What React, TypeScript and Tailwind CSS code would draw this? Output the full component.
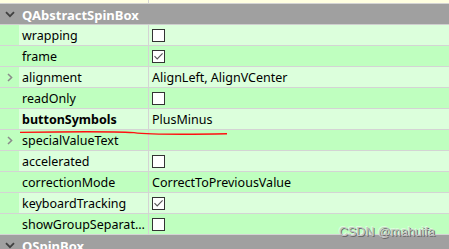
import React from "react";

type Row = {
  name: string;
  value?: string;
  check?: boolean | null;
  bold?: boolean;
  expand?: boolean;
};

const rows: Row[] = [
  { name: "wrapping", check: false },
  { name: "frame", check: true },
  { name: "alignment", value: "AlignLeft, AlignVCenter", expand: true },
  { name: "readOnly", check: false },
  { name: "buttonSymbols", value: "PlusMinus", bold: true },
  { name: "specialValueText", value: "", expand: true },
  { name: "accelerated", check: false },
  { name: "correctionMode", value: "CorrectToPreviousValue" },
  { name: "keyboardTracking", check: true },
  { name: "showGroupSeparat…", check: false },
];

function CheckBox({ checked }: { checked: boolean }) {
  return (
    <div className="w-[13px] h-[13px] border border-[#333333] bg-white flex items-center justify-center">
      {checked && (
        <svg width="11" height="11" viewBox="0 0 11 11">
          <path d="M1.5 5.2 L4.2 7.9 L9.6 2.3" fill="none" stroke="#555555" strokeWidth="1.1" />
        </svg>
      )}
    </div>
  );
}

function Header({ title }: { title: string }) {
  return (
    <div className="h-[21px] shrink-0 bg-[#a0a0a0] border-b border-[#cfcfcf] flex items-center">
      <div className="w-[19px] h-full flex items-center justify-center">
        <svg width="10" height="7" viewBox="0 0 10 7">
          <path d="M1 1.2 L5 5.2 L9 1.2" fill="none" stroke="#404040" strokeWidth="1.8" />
        </svg>
      </div>
      <span className="pl-[3px] pt-[2px] font-bold text-white text-[13px] leading-none">{title}</span>
    </div>
  );
}

export default function App() {
  return (
    <div className="relative w-[449px] h-[249px] overflow-hidden bg-white font-['Noto_Sans',sans-serif] text-[12.5px] text-black">
      <div className="flex flex-col">
        {/* partially visible row */}
        <div className="h-[4px] shrink-0 bg-[#ffffe1] border-b border-[#d4d4d4] flex overflow-hidden">
          <div className="w-[149px] border-r border-[#d4d4d4]" />
          <div className="pl-[3px] leading-[16px] -mt-[15px] whitespace-nowrap">ImhDigitsOnly</div>
        </div>
        <Header title="QAbstractSpinBox" />
        {rows.map((r, i) => {
          const light = i % 2 === 0;
          const bg = light ? "bg-[#dcffdc]" : "bg-[#bfffbf]";
          const isCheck = r.check !== undefined && r.check !== null;
          return (
            <div key={r.name} className={`h-[21px] shrink-0 flex border-b border-[#d4d4d4] ${bg}`}>
              <div className="w-[19px] shrink-0 bg-[#bfffbf] flex items-center justify-center">
                {r.expand && (
                  <svg width="6" height="9" viewBox="0 0 6 9">
                    <path d="M1 1 L4.6 4.5 L1 8" fill="none" stroke="#8a8a8a" strokeWidth="1.5" />
                  </svg>
                )}
              </div>
              <div
                className={`w-[130px] shrink-0 border-r border-[#d4d4d4] pl-[3px] pt-[2px] flex items-center whitespace-nowrap overflow-hidden ${
                  r.bold ? "font-bold" : ""
                }`}
              >
                {r.name}
              </div>
              <div className={`flex-1 pl-[3px] flex items-center whitespace-nowrap ${isCheck ? "" : "pt-[2px]"}`}>
                {isCheck ? <CheckBox checked={!!r.check} /> : r.value}
              </div>
            </div>
          );
        })}
        <Header title="QSpinBox" />
      </div>

      {/* hand-drawn red underline */}
      <svg className="absolute left-0 top-0 pointer-events-none" width="449" height="249" viewBox="0 0 449 249">
        <path
          d="M20 132.4 C 70 131.6, 115 131.6, 134 132.6 C 146 134.2, 190 134.4, 227 133.8"
          fill="none"
          stroke="#ff1010"
          strokeWidth="1.4"
        />
      </svg>

      {/* watermark */}
      <div className="absolute left-[339px] top-[224px] font-['Liberation_Sans',sans-serif] text-[12.5px] leading-[16px] text-[#c4c4c4] [text-shadow:1px_1px_0_#6a6a6a,-1px_-1px_0_rgba(255,255,255,0.5)] whitespace-nowrap pointer-events-none">
        CSDN @mahuifa
      </div>
    </div>
  );
}
